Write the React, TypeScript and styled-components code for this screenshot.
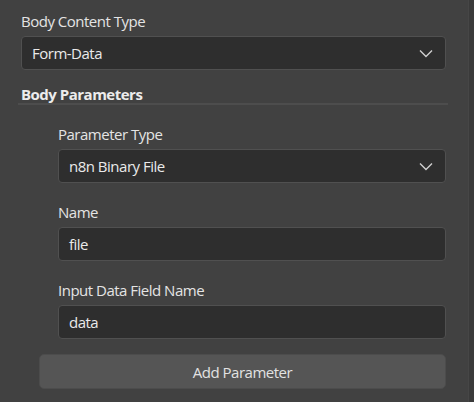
import React from 'react';
import styled, { createGlobalStyle } from 'styled-components';

const GlobalStyle = createGlobalStyle`
  html, body {
    margin: 0;
    padding: 0;
    background: #414141;
  }
  body {
    font-family: "Open Sans", "Noto Sans", sans-serif;
    letter-spacing: -0.5px;
  }
`;

const Page = styled.div`
  display: flex;
  width: 474px;
  height: 402px;
  overflow: hidden;
  background: #414141;
`;

const Panel = styled.div`
  flex: 1;
  padding: 11px 22px 0 21px;
  display: flex;
  flex-direction: column;
`;

const Scrollbar = styled.div`
  width: 5px;
  background: #3a3a3a;
  border-left: 1px solid #464646;
`;

const Label = styled.div`
  color: #e4e4e4;
  font-size: 15px;
  line-height: 20px;
  margin-bottom: 5px;
`;

const Field = styled.div`
  display: flex;
  flex-direction: column;
`;

const Box = styled.div`
  height: 34px;
  box-sizing: border-box;
  border: 1px solid #505050;
  border-radius: 4px;
  background: #2e2e2e;
  display: flex;
  align-items: center;
  justify-content: space-between;
  padding: 0 12px 0 10px;
  color: #eaeaea;
  font-size: 15px;
`;

const Section = styled.div`
  color: #ececec;
  font-size: 15px;
  font-weight: 700;
  line-height: 18px;
  border-bottom: 2px solid #4d4d4d;
  margin: 15px -2px 0 -3px;
  padding-left: 3px;
`;

const Nested = styled.div`
  display: flex;
  flex-direction: column;
  gap: 19px;
  padding-left: 37px;
  margin-top: 19px;
`;

const AddButton = styled.button`
  margin: 15px 0 0 18px;
  height: 35px;
  border: 1px solid #4c4c4c;
  border-radius: 5px;
  background: #555555;
  color: #e2e2e2;
  font-family: "Open Sans", "Noto Sans", sans-serif;
  font-size: 15px;
  letter-spacing: -0.5px;
`;

function Chevron() {
  return (
    <svg width="14" height="9" viewBox="0 0 14 9" fill="none">
      <path d="M1 1.5 L7 7.5 L13 1.5" stroke="#cfcfcf" strokeWidth="1.4" />
    </svg>
  );
}

function Select({ value }: { value: string }) {
  return (
    <Box>
      <span>{value}</span>
      <Chevron />
    </Box>
  );
}

export default function App() {
  return (
    <Page>
      <GlobalStyle />
      <Panel>
        <Field>
          <Label>Body Content Type</Label>
          <Select value="Form-Data" />
        </Field>
        <Section>Body Parameters</Section>
        <Nested>
          <Field>
            <Label>Parameter Type</Label>
            <Select value="n8n Binary File" />
          </Field>
          <Field>
            <Label>Name</Label>
            <Box>file</Box>
          </Field>
          <Field>
            <Label>Input Data Field Name</Label>
            <Box>data</Box>
          </Field>
        </Nested>
        <AddButton>Add Parameter</AddButton>
      </Panel>
      <Scrollbar />
    </Page>
  );
}
